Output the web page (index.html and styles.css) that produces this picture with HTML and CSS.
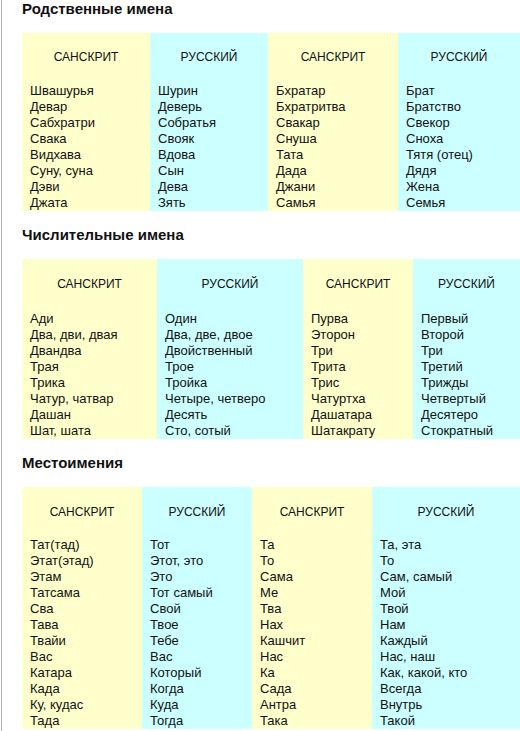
FILE: index.html
```html
<!DOCTYPE html>
<html lang="ru">
<head>
<meta charset="utf-8">
<title>Санскрит и русский</title>
<link rel="stylesheet" href="styles.css">
</head>
<body>
<div class="page">
  <h2 class="title first">Родственные имена</h2>
  <table class="words t1">
    <colgroup><col class="y"><col class="c"><col class="y"><col class="c"></colgroup>
    <thead><tr><th>САНСКРИТ</th><th>РУССКИЙ</th><th>САНСКРИТ</th><th>РУССКИЙ</th></tr></thead>
    <tbody>
      <tr><td>Швашурья</td><td>Шурин</td><td>Бхратар</td><td>Брат</td></tr>
      <tr><td>Девар</td><td>Деверь</td><td>Бхратритва</td><td>Братство</td></tr>
      <tr><td>Сабхратри</td><td>Собратья</td><td>Свакар</td><td>Свекор</td></tr>
      <tr><td>Свака</td><td>Свояк</td><td>Снуша</td><td>Сноха</td></tr>
      <tr><td>Видхава</td><td>Вдова</td><td>Тата</td><td>Тятя (отец)</td></tr>
      <tr><td>Суну, суна</td><td>Сын</td><td>Дада</td><td>Дядя</td></tr>
      <tr><td>Дэви</td><td>Дева</td><td>Джани</td><td>Жена</td></tr>
      <tr><td>Джата</td><td>Зять</td><td>Самья</td><td>Семья</td></tr>
    </tbody>
  </table>

  <h2 class="title">Числительные имена</h2>
  <table class="words t2">
    <colgroup><col class="y"><col class="c"><col class="y"><col class="c"></colgroup>
    <thead><tr><th>САНСКРИТ</th><th>РУССКИЙ</th><th>САНСКРИТ</th><th>РУССКИЙ</th></tr></thead>
    <tbody>
      <tr><td>Ади</td><td>Один</td><td>Пурва</td><td>Первый</td></tr>
      <tr><td>Два, дви, двая</td><td>Два, две, двое</td><td>Эторон</td><td>Второй</td></tr>
      <tr><td>Двандва</td><td>Двойственный</td><td>Три</td><td>Три</td></tr>
      <tr><td>Трая</td><td>Трое</td><td>Трита</td><td>Третий</td></tr>
      <tr><td>Трика</td><td>Тройка</td><td>Трис</td><td>Трижды</td></tr>
      <tr><td>Чатур, чатвар</td><td>Четыре, четверо</td><td>Чатуртха</td><td>Четвертый</td></tr>
      <tr><td>Дашан</td><td>Десять</td><td>Дашатара</td><td>Десятеро</td></tr>
      <tr><td>Шат, шата</td><td>Сто, сотый</td><td>Шатакрату</td><td>Стократный</td></tr>
    </tbody>
  </table>

  <h2 class="title">Местоимения</h2>
  <table class="words t3">
    <colgroup><col class="y"><col class="c"><col class="y"><col class="c"></colgroup>
    <thead><tr><th>САНСКРИТ</th><th>РУССКИЙ</th><th>САНСКРИТ</th><th>РУССКИЙ</th></tr></thead>
    <tbody>
      <tr><td>Тат(тад)</td><td>Тот</td><td>Та</td><td>Та, эта</td></tr>
      <tr><td>Этат(этад)</td><td>Этот, это</td><td>То</td><td>То</td></tr>
      <tr><td>Этам</td><td>Это</td><td>Сама</td><td>Сам, самый</td></tr>
      <tr><td>Татсама</td><td>Тот самый</td><td>Ме</td><td>Мой</td></tr>
      <tr><td>Сва</td><td>Свой</td><td>Тва</td><td>Твой</td></tr>
      <tr><td>Тава</td><td>Твое</td><td>Нах</td><td>Нам</td></tr>
      <tr><td>Твайи</td><td>Тебе</td><td>Кашчит</td><td>Каждый</td></tr>
      <tr><td>Вас</td><td>Вас</td><td>Нас</td><td>Нас, наш</td></tr>
      <tr><td>Катара</td><td>Который</td><td>Ка</td><td>Как, какой, кто</td></tr>
      <tr><td>Када</td><td>Когда</td><td>Сада</td><td>Всегда</td></tr>
      <tr><td>Ку, кудас</td><td>Куда</td><td>Антра</td><td>Внутрь</td></tr>
      <tr><td>Тада</td><td>Тогда</td><td>Така</td><td>Такой</td></tr>
    </tbody>
  </table>
</div>
</body>
</html>
```

FILE: styles.css
```css
html, body {
  margin: 0;
  padding: 0;
  background: #ffffff;
}

body {
  font-family: "Liberation Sans", Arial, sans-serif;
  color: #111111;
  overflow: hidden;
}

.page {
  margin-left: 1px;
  border-left: 1px solid #b4b4b4;
  padding-left: 20px;
  min-height: 731px;
  box-sizing: border-box;
}

.title {
  margin: 15px 0 15px 0;
  font-size: 15px;
  line-height: 18px;
  font-weight: bold;
  color: #111111;
}

.title.first {
  margin-top: 0;
}

.words {
  border-collapse: collapse;
  border-spacing: 0;
  table-layout: fixed;
  width: 498px;
}

.words col.y {
  background: #ffffcc;
}

.words col.c {
  background: #ccffff;
}

.words th {
  font-weight: normal;
  font-size: 12px;
  line-height: 16px;
  text-align: center;
  padding: 16px 0 18px 0;
}

.words td {
  font-size: 13px;
  line-height: 16px;
  padding: 0 0 0 8px;
  white-space: nowrap;
  text-align: left;
}

.t1 col:nth-child(1) { width: 128px; }
.t1 col:nth-child(2) { width: 118px; }
.t1 col:nth-child(3) { width: 130px; }
.t1 col:nth-child(4) { width: 122px; }

.t2 col:nth-child(1) { width: 135px; }
.t2 col:nth-child(2) { width: 146px; }
.t2 col:nth-child(3) { width: 110px; }
.t2 col:nth-child(4) { width: 107px; }

.t2 th {
  padding: 17px 0 19px 0;
}

.t3 col:nth-child(1) { width: 120px; }
.t3 col:nth-child(2) { width: 110px; }
.t3 col:nth-child(3) { width: 120px; }
.t3 col:nth-child(4) { width: 148px; }

.t3 th {
  padding: 17px 0 17px 0;
}
```
